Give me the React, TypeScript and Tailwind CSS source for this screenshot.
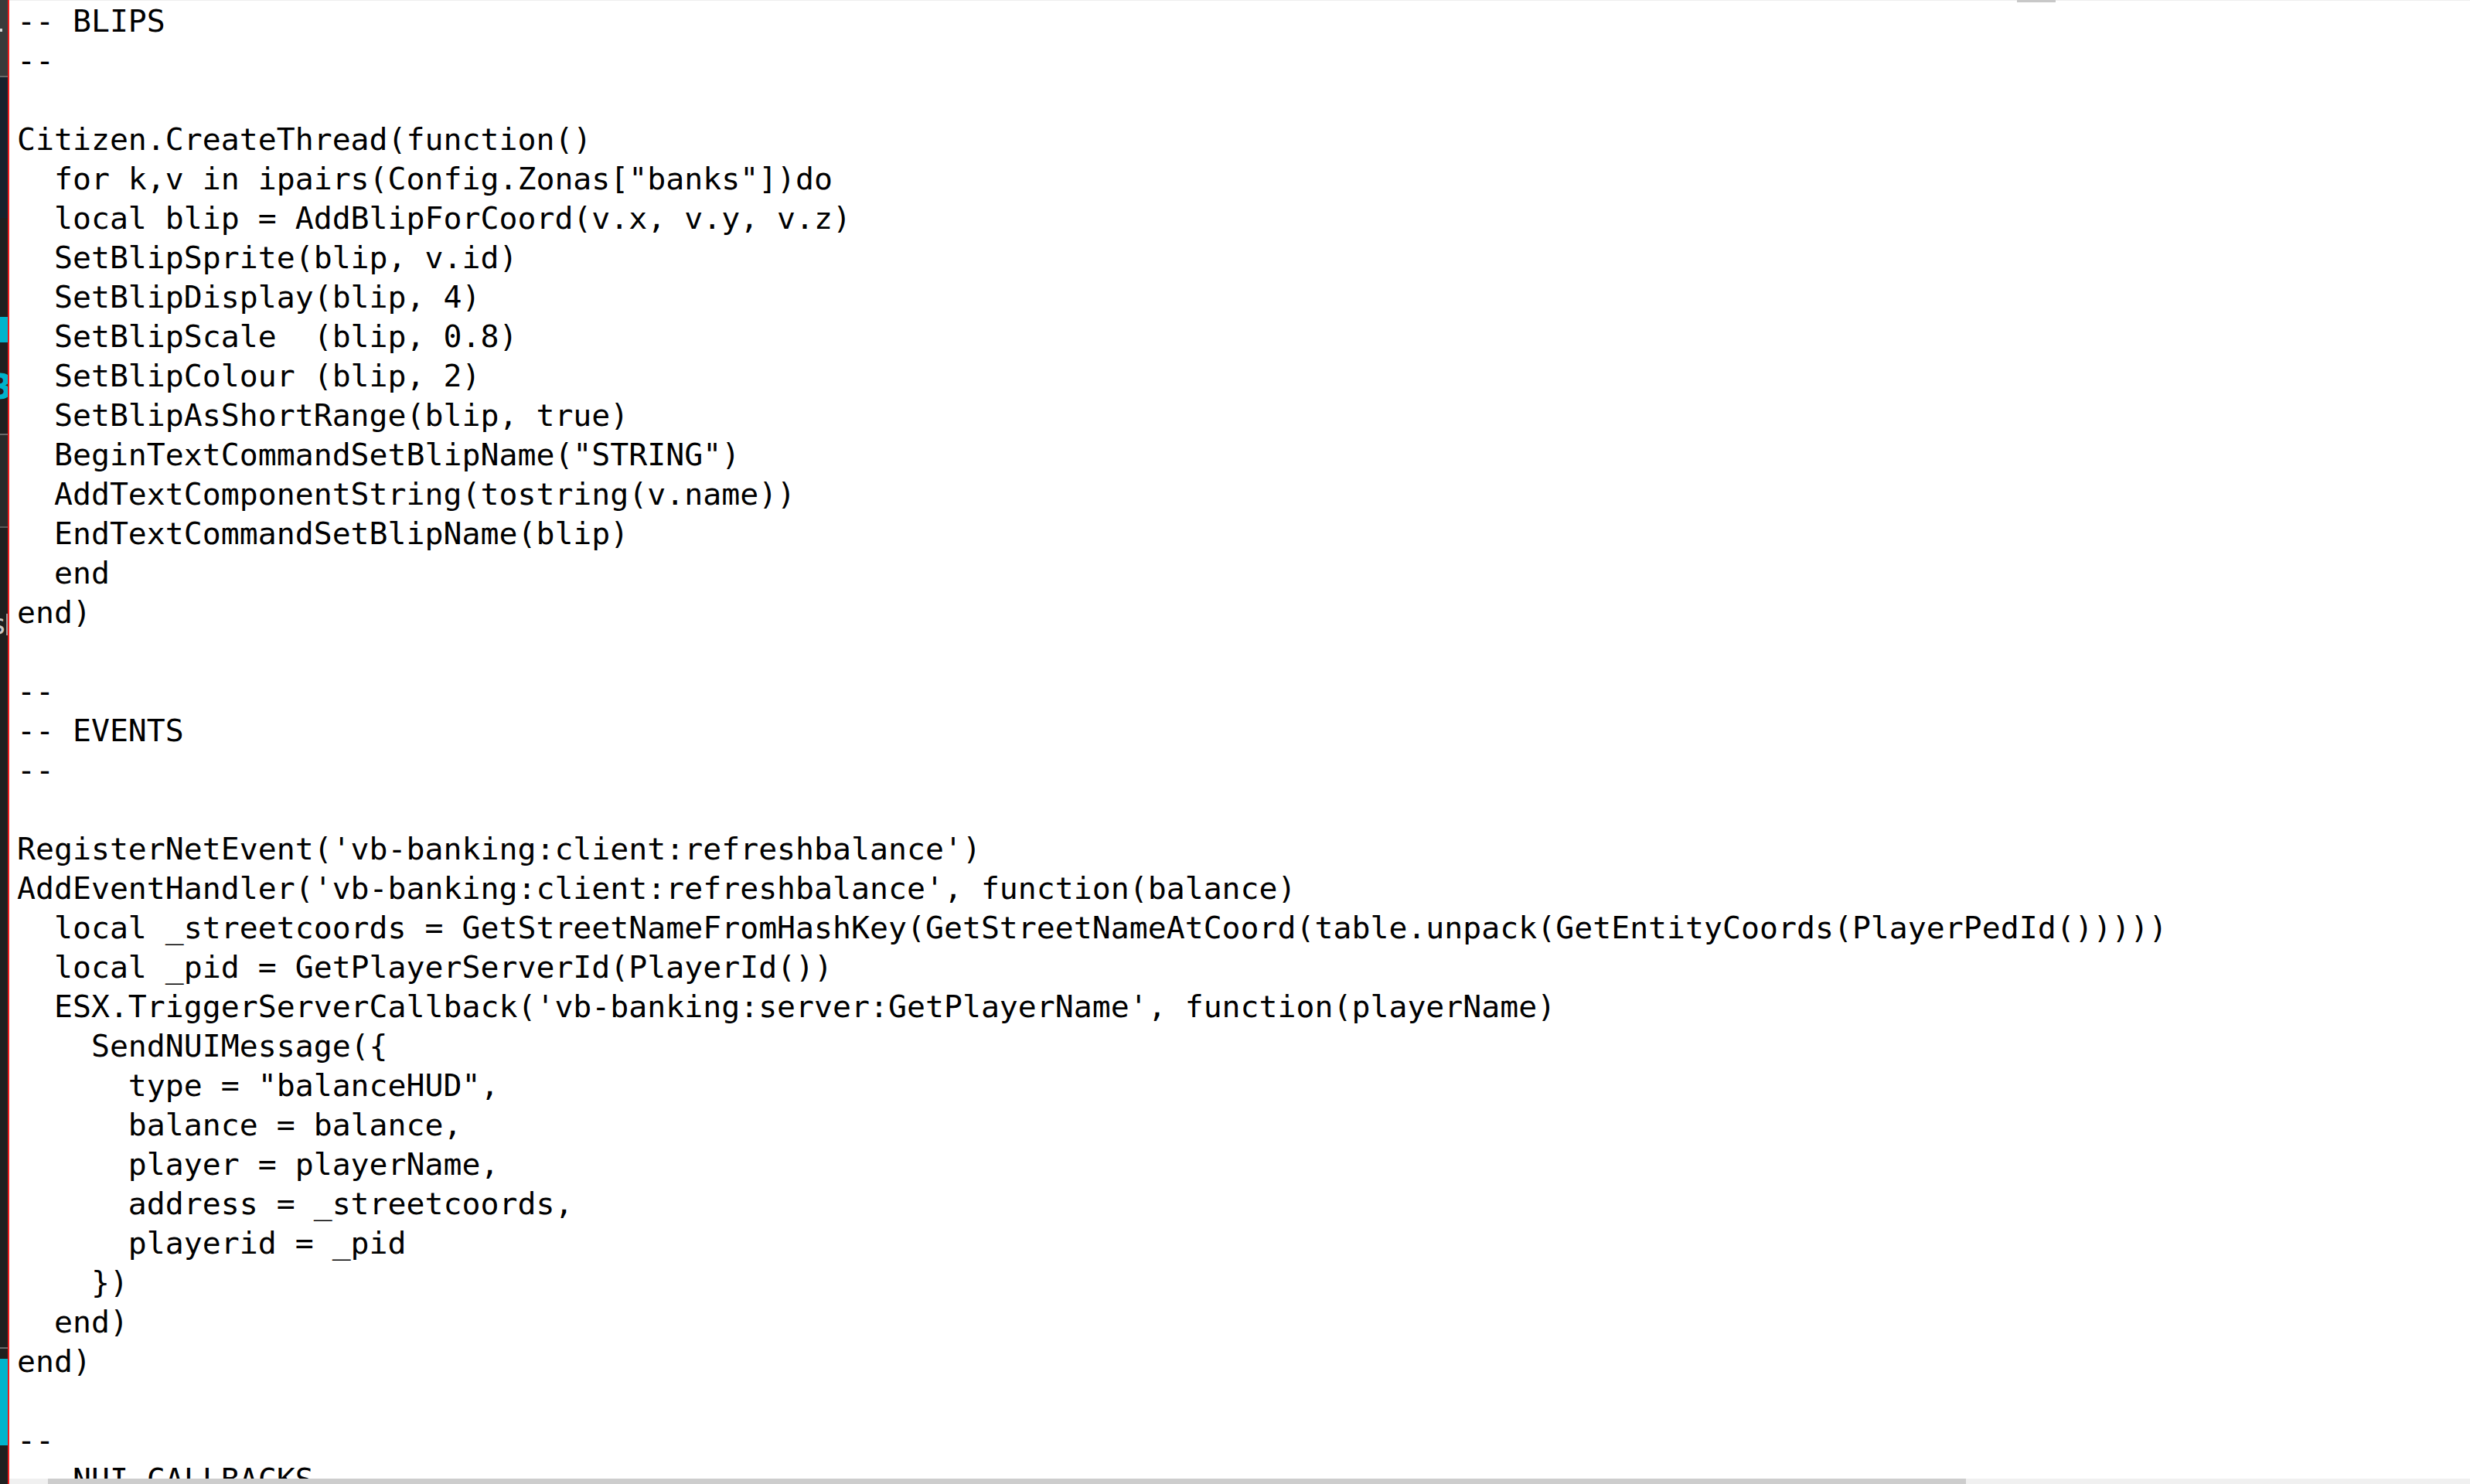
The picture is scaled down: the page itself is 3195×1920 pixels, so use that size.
import React from 'react';

const codeLines: string[] = [
  '-- BLIPS',
  '--',
  '',
  'Citizen.CreateThread(function()',
  '  for k,v in ipairs(Config.Zonas["banks"])do',
  '  local blip = AddBlipForCoord(v.x, v.y, v.z)',
  '  SetBlipSprite(blip, v.id)',
  '  SetBlipDisplay(blip, 4)',
  '  SetBlipScale  (blip, 0.8)',
  '  SetBlipColour (blip, 2)',
  '  SetBlipAsShortRange(blip, true)',
  '  BeginTextCommandSetBlipName("STRING")',
  '  AddTextComponentString(tostring(v.name))',
  '  EndTextCommandSetBlipName(blip)',
  '  end',
  'end)',
  '',
  '--',
  '-- EVENTS',
  '--',
  '',
  "RegisterNetEvent('vb-banking:client:refreshbalance')",
  "AddEventHandler('vb-banking:client:refreshbalance', function(balance)",
  '  local _streetcoords = GetStreetNameFromHashKey(GetStreetNameAtCoord(table.unpack(GetEntityCoords(PlayerPedId()))))',
  '  local _pid = GetPlayerServerId(PlayerId())',
  "  ESX.TriggerServerCallback('vb-banking:server:GetPlayerName', function(playerName)",
  '    SendNUIMessage({',
  '      type = "balanceHUD",',
  '      balance = balance,',
  '      player = playerName,',
  '      address = _streetcoords,',
  '      playerid = _pid',
  '    })',
  '  end)',
  'end)',
  '',
  '--',
  '-- NUI CALLBACKS',
  '--',
];

// sliver of the window behind the editor, on the far left
const SideStrip: React.FC = () => (
  <div className="flex flex-col w-[10px] h-full shrink-0 overflow-hidden bg-[#1f1f1f]">
    <div className="h-[98px] bg-[#3a3a3a] flex flex-col">
      <div className="h-[37px]" />
      <div className="w-[3px] h-[4px] bg-[#d8d8d8]" />
    </div>
    <div className="h-[2px] bg-[#6a6a6a]" />
    <div className="h-[182px] bg-[#16212c]" />
    <div className="h-[128px] bg-[#1f1f1f]" />
    <div className="h-[33px] bg-[#00b4cc]" />
    <div className="h-[118px] bg-[#1f1f1f] pt-[36px]">
      <div className="flex items-center">
        <span className="-ml-[14px] text-[44px] leading-[44px] font-bold text-[#00b4cc] font-['DejaVu_Sans',sans-serif]">3</span>
      </div>
    </div>
    <div className="h-[2px] bg-[#6a6a6a]" />
    <div className="h-[118px] bg-[#2a2a2a]" />
    <div className="h-[2px] bg-[#5a5a5a]" />
    <div className="h-[1060px] bg-[#1f1f1f] pt-[110px]">
      <div className="flex items-center">
        <span className="-ml-[12px] text-[36px] leading-[30px] text-[#c8c8c8] font-['DejaVu_Sans',sans-serif]">s</span>
        <span className="ml-[1px] w-[2px] h-[28px] bg-[#9a9a9a]" />
      </div>
    </div>
    <div className="h-[2px] bg-[#6a6a6a]" />
    <div className="h-[13px] bg-[#1f1f1f]" />
    <div className="h-[112px] bg-[#00b4cc]" />
    <div className="flex-1 bg-[#1f1f1f]" />
  </div>
);

export default function App() {
  return (
    <div className="flex w-[3195px] h-[1920px] overflow-hidden bg-white">
      <SideStrip />
      <div className="w-[2px] h-full shrink-0 bg-[#f01c1c]" />
      <div className="flex flex-col flex-1 min-w-0 h-full">
        <div className="h-[1px] shrink-0 bg-[#efefef] flex">
          <div className="w-[2597px]" />
          <div className="w-[50px] h-[3px] bg-[#c8c8c8]" />
        </div>
        <div className="flex-1 min-h-0 overflow-hidden pl-[10px] pt-[1px]">
          <pre className="m-0 font-['DejaVu_Sans_Mono','Liberation_Mono',monospace] text-[39.85px] leading-[51px] text-black whitespace-pre">
            {codeLines.map((line, i) => (
              <div key={i} className="h-[51px]">{line}</div>
            ))}
          </pre>
        </div>
        <div className="h-[7px] shrink-0 bg-[#f0f0f0] flex">
          <div className="w-[50px]" />
          <div className="w-[2481px] bg-[#cdcdcd]" />
        </div>
      </div>
    </div>
  );
}
